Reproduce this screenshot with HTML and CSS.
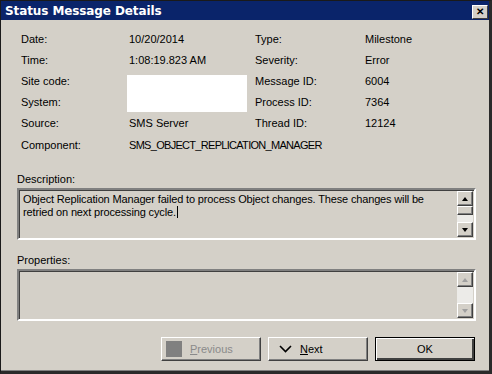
FILE: index.html
```html
<!DOCTYPE html>
<html lang="en">
<head>
  <meta charset="UTF-8" />
  <title>Status Message Details</title>
  <link rel="stylesheet" href="styles.css">
</head>
<body>
  <div class="window">
    <div class="titlebar">
      <span class="title">Status Message Details</span>
      <span class="close-btn">&#x2715;</span>
    </div>

    <div class="content">
      <div class="fields">
        <span class="label">Date:</span>
        <span class="value">10/20/2014</span>
        <span class="label">Type:</span>
        <span class="value">Milestone</span>

        <span class="label">Time:</span>
        <span class="value">1:08:19.823 AM</span>
        <span class="label">Severity:</span>
        <span class="value">Error</span>

        <span class="label">Site code:</span>
        <span class="blank"></span>
        <span class="label">Message ID:</span>
        <span class="value">6004</span>

        <span class="label">System:</span>
        <span class="label">Process ID:</span>
        <span class="value">7364</span>

        <span class="label">Source:</span>
        <span class="value">SMS Server</span>
        <span class="label">Thread ID:</span>
        <span class="value">12124</span>

        <span class="label">Component:</span>
        <span class="value wide">SMS_OBJECT_REPLICATION_MANAGER</span>
      </div>

      <div class="section-label">Description:</div>
      <div class="textbox">
        <div class="textbox-text">Object Replication Manager failed to process Object changes. These changes will be retried on next processing cycle.<span class="caret"></span></div>
        <div class="scrollbar">
          <span class="sb-btn"><span class="arrow up"></span></span>
          <span class="sb-thumb"></span>
          <span class="sb-track"></span>
          <span class="sb-btn"><span class="arrow down"></span></span>
        </div>
      </div>

      <div class="section-label props">Properties:</div>
      <div class="textbox">
        <div class="textbox-text"></div>
        <div class="scrollbar disabled">
          <span class="sb-btn"><span class="arrow up"></span></span>
          <span class="sb-track"></span>
          <span class="sb-btn"><span class="arrow down"></span></span>
        </div>
      </div>

      <div class="buttons">
        <button class="btn disabled" type="button">
          <span class="prev-icon"></span>
          <span><u>P</u>revious</span>
        </button>
        <button class="btn" type="button">
          <svg class="next-icon" width="13" height="8" viewBox="0 0 13 8">
            <path d="M1 1 L6.5 6.5 L12 1" fill="none" stroke="#000" stroke-width="1.6"/>
          </svg>
          <span><u>N</u>ext</span>
        </button>
        <button class="btn default" type="button">OK</button>
      </div>
    </div>
  </div>
</body>
</html>
```

FILE: styles.css
```css
body {
  margin: 0;
  font-family: 'Liberation Sans', Arial, sans-serif;
  font-size: 11px;
  color: #000;
  background: #222;
}

.window {
  width: 492px;
  height: 374px;
  box-sizing: border-box;
  border: 1px solid #1a1a1a;
  border-bottom: 3px solid #2a2a2a;
  border-right: 3px solid #2a2a2a;
  background: #d4d0c8;
  display: flex;
  flex-direction: column;
  box-shadow: inset 0 -1px 0 #808080;
}

.titlebar {
  height: 19px;
  background: #0a246a;
  display: flex;
  align-items: center;
  justify-content: space-between;
  padding: 0 0 0 4px;
}

.title {
  color: #fff;
  font-weight: bold;
  font-size: 12px;
  font-family: 'DejaVu Sans', sans-serif;
  letter-spacing: -0.1px;
}

.close-btn {
  width: 16px;
  height: 14px;
  box-sizing: border-box;
  margin: 2px 1px 0 0;
  background: #d4d0c8;
  border: 1px solid;
  border-color: #fff #404040 #404040 #fff;
  font-size: 10px;
  font-weight: bold;
  line-height: 12px;
  text-align: center;
}

.content {
  flex: 1;
  padding: 8px 13px 0 16px;
  display: flex;
  flex-direction: column;
}

.fields {
  display: grid;
  grid-template-columns: 108px 126px 110px 1fr;
  grid-template-rows: 21px 21px 21px 21px 22px 22px;
  align-items: center;
  padding-left: 4px;
}

.value.wide {
  grid-column: 2 / span 3;
  letter-spacing: -0.7px;
}

.blank {
  grid-column: 2;
  grid-row: 3 / span 2;
  align-self: stretch;
  background: #fff;
  margin: 5px 8px 0 -2px;
}

.section-label {
  margin-top: 16px;
  height: 15px;
  line-height: 15px;
}

.section-label.props {
  margin-top: 13px;
}

.textbox {
  height: 52px;
  box-sizing: border-box;
  border: 2px solid;
  border-color: #808080 #fff #fff #808080;
  box-shadow: inset 1px 1px 0 #404040;
  display: flex;
  margin-top: 1px;
}

.textbox-text {
  flex: 1;
  padding: 3px 3px 0 4px;
  line-height: 13px;
  letter-spacing: -0.15px;
}

.caret {
  display: inline-block;
  width: 1px;
  height: 12px;
  background: #000;
  vertical-align: -2px;
  margin-left: 1px;
}

.scrollbar {
  width: 16px;
  margin: 1px 1px 1px 0;
  display: flex;
  flex-direction: column;
}

.sb-btn,
.sb-thumb {
  height: 15px;
  box-sizing: border-box;
  background: #d4d0c8;
  border: 1px solid;
  border-color: #fff #404040 #404040 #fff;
  box-shadow: inset -1px -1px 0 #808080;
  display: flex;
  align-items: center;
  justify-content: center;
}

.sb-thumb {
  height: 9px;
}

.sb-track {
  flex: 1;
  background: #ecebe8;
}

.arrow {
  width: 0;
  height: 0;
  border-left: 3px solid transparent;
  border-right: 3px solid transparent;
}

.arrow.up {
  border-bottom: 4px solid #000;
}

.arrow.down {
  border-top: 4px solid #000;
}

.scrollbar.disabled .arrow.up {
  border-bottom-color: #a0a0a0;
}

.scrollbar.disabled .arrow.down {
  border-top-color: #a0a0a0;
}

.buttons {
  display: flex;
  justify-content: flex-end;
  gap: 7px;
  margin-top: 16px;
  padding-right: 1px;
}

.btn {
  width: 100px;
  height: 24px;
  box-sizing: border-box;
  background: #d4d0c8;
  border: 1px solid;
  border-color: #fff #404040 #404040 #fff;
  box-shadow: inset -1px -1px 0 #808080;
  font-family: inherit;
  font-size: 11px;
  color: #000;
  display: flex;
  align-items: center;
  justify-content: flex-start;
  gap: 8px;
  padding: 0 0 0 4px;
}

.btn.default {
  justify-content: center;
  border: 1px solid #000;
  box-shadow: inset 1px 1px 0 #fff, inset -2px -2px 0 #404040;
  padding: 0;
}

.btn.disabled {
  color: #8a8a8a;
}

.prev-icon {
  width: 16px;
  height: 16px;
  background: #808080;
}

.next-icon {
  margin-left: 6px;
}
```
